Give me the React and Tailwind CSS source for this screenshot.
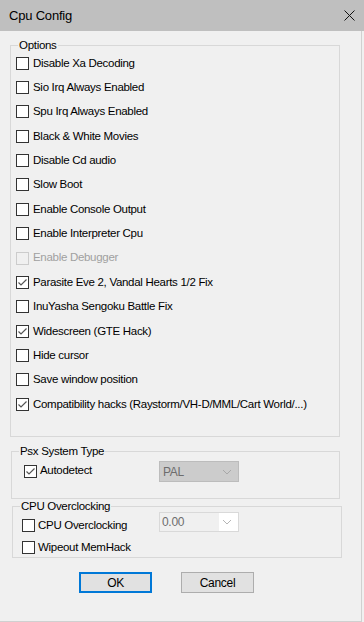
const options = [
  { label: "Disable Xa Decoding" },
  { label: "Sio Irq Always Enabled" },
  { label: "Spu Irq Always Enabled" },
  { label: "Black & White Movies" },
  { label: "Disable Cd audio" },
  { label: "Slow Boot" },
  { label: "Enable Console Output" },
  { label: "Enable Interpreter Cpu" },
  { label: "Enable Debugger", disabled: true },
  { label: "Parasite Eve 2, Vandal Hearts 1/2 Fix", checked: true },
  { label: "InuYasha Sengoku Battle Fix" },
  { label: "Widescreen (GTE Hack)", checked: true },
  { label: "Hide cursor" },
  { label: "Save window position" },
  { label: "Compatibility hacks (Raystorm/VH-D/MML/Cart World/...)", checked: true },
];

const font = { fontFamily: '"Liberation Sans", Arial, sans-serif' };

function Check({ checked, disabled }) {
  return (
    <span
      className={
        "w-[13px] h-[13px] shrink-0 border flex items-center justify-center " +
        (disabled ? "border-[#cccccc] bg-[#f0f0f0]" : "border-[#333333] bg-white")
      }
    >
      {checked && (
        <svg width="11" height="11" viewBox="0 0 11 11">
          <path d="M1.5 5.5 L4 8 L9.5 2.5" fill="none" stroke="#555" strokeWidth="1.2" />
        </svg>
      )}
    </span>
  );
}

function CheckRow({ label, checked, disabled }) {
  return (
    <div className="flex items-center gap-[4px] h-[24.36px]">
      <Check checked={checked} disabled={disabled} />
      <span className={disabled ? "text-[#a0a0a0]" : "text-black"}>{label}</span>
    </div>
  );
}

function Chevron({ color = "#a8a8a8" }) {
  return (
    <svg width="10" height="6" viewBox="0 0 10 6">
      <path d="M1 1 L5 5 L9 1" fill="none" stroke={color} strokeWidth="1" />
    </svg>
  );
}

export default function App() {
  return (
    <div
      className="w-[364px] h-[622px] bg-[#f0f0f0] text-[11.5px] tracking-[-0.3px] text-black overflow-hidden"
      style={font}
    >
      {/* Title bar */}
      <div className="h-[31px] bg-[#bfbfbf] flex items-center justify-between pl-[9px] pr-[9px]">
        <span className="text-[13px] tracking-[-0.2px]">Cpu Config</span>
        <svg width="11" height="11" viewBox="0 0 11 11">
          <path d="M0.5 0.5 L10.5 10.5 M10.5 0.5 L0.5 10.5" stroke="#111" strokeWidth="1" />
        </svg>
      </div>

      <div className="w-[362px] h-[591px] border-r border-b border-[#d0d0d0] flex flex-col">
        {/* Options */}
        <fieldset className="ml-[10px] mt-[8px] w-[330px] border border-[#d8d8d8] pb-[20px] pl-[5px]">
          <legend className="ml-[2px] px-[1px] leading-[12px] h-[12px]">Options</legend>
          <div className="flex flex-col">
            {options.map((o) => (
              <CheckRow key={o.label} {...o} />
            ))}
          </div>
        </fieldset>

        {/* Psx System Type */}
        <fieldset className="ml-[11px] mt-[8px] w-[329px] border border-[#d8d8d8] pl-[12px] pt-[4px] pb-[16px]">
          <legend className="ml-[-5px] px-[1px] leading-[12px] h-[12px]">Psx System Type</legend>
          <div className="flex items-start">
            <div className="flex items-center gap-[3px] mt-[1px] w-[135px]">
              <Check checked />
              <span>Autodetect</span>
            </div>
            <div className="w-[80px] h-[21px] bg-[#cccccc] border border-[#bcbcbc] flex items-center justify-between pl-[3px] pr-[6px]">
              <span className="text-[#6d6d6d] text-[12px]">PAL</span>
              <Chevron />
            </div>
          </div>
        </fieldset>

        {/* CPU Overclocking */}
        <fieldset className="ml-[12px] mt-[1px] w-[330px] border border-[#d8d8d8] pl-[9px] pb-[3px]">
          <legend className="ml-[-2px] px-[1px] leading-[12px] h-[12px]">CPU Overclocking</legend>
          <div className="flex items-start">
            <div className="flex flex-col gap-[9px] pt-[7px] w-[137px]">
              <div className="flex items-center gap-[3px] h-[13px]">
                <Check />
                <span>CPU Overclocking</span>
              </div>
              <div className="flex items-center gap-[3px] h-[13px]">
                <Check />
                <span>Wipeout MemHack</span>
              </div>
            </div>
            <div className="w-[80px] h-[20px] bg-white border border-[#d9d9d9] flex items-center justify-between pr-[6px]">
              <span className="h-full w-[59px] bg-[#f0f0f0] text-[#6d6d6d] text-[12px] pl-[2px] flex items-center">
                0.00
              </span>
              <Chevron color="#b5b5b5" />
            </div>
          </div>
        </fieldset>

        {/* Buttons */}
        <div className="flex gap-[29px] pl-[79px] mt-[14px]">
          <button className="w-[73px] h-[21px] bg-[#e1e1e1] border-2 border-[#0078d7] flex items-center justify-center text-[12px]">
            OK
          </button>
          <button className="w-[73px] h-[21px] bg-[#e1e1e1] border border-[#adadad] flex items-center justify-center text-[12px]">
            Cancel
          </button>
        </div>
      </div>
    </div>
  );
}
